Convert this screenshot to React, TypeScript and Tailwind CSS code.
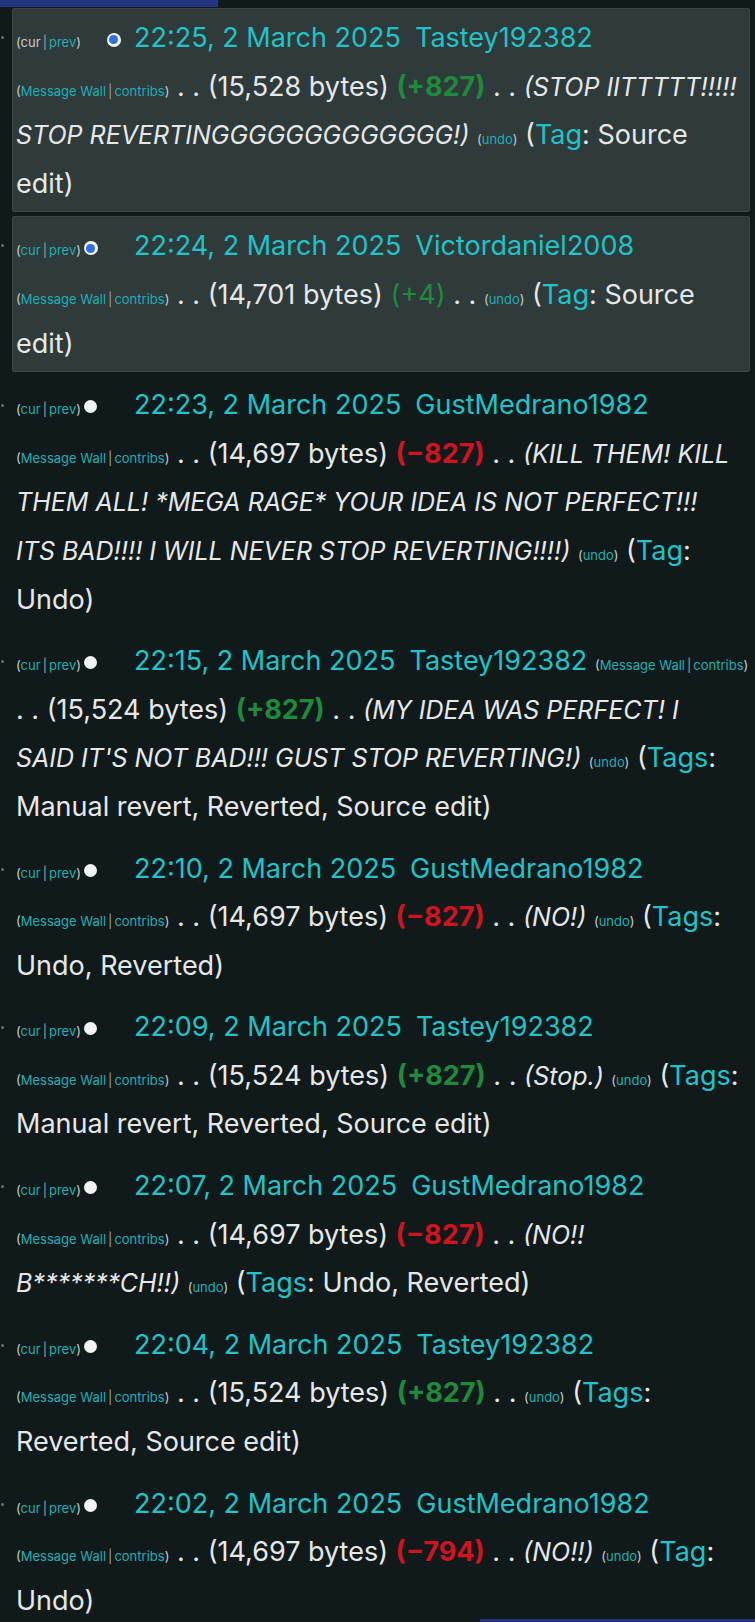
import React from 'react';

type Entry = {
  panel?: boolean;
  curLink?: boolean;
  farRadio?: boolean;
  radio: 'blue' | 'white';
  lines: React.ReactNode[];
};

const Small = ({ a, b, aLink = true }: { a: string; b: string; aLink?: boolean }) => (
  <span className="text-[13px] leading-none text-[#c9cdcd]">
    (<span className={aLink ? 'text-[#22aeb3]' : ''}>{a}</span>
    <span className="mx-[2px] text-[#9aa2a2]">|</span>
    <span className="text-[#22aeb3]">{b}</span>)
  </span>
);

const Undo = () => (
  <span className="text-[13px] leading-none text-[#c9cdcd]">
    (<span className="text-[#22aeb3]">undo</span>)
  </span>
);

const Dots = () => <span>. .</span>;
const Plus = ({ n, bold = true }: { n: string; bold?: boolean }) => (
  <span className={bold ? 'font-bold text-[#1f8a3b]' : 'text-[#1f8a3b]'}>({n})</span>
);
const Minus = ({ n }: { n: string }) => (
  <span className="font-bold text-[#d3121f]">(−{n})</span>
);
const Tag = ({ s = '' }: { s?: string }) => (
  <span>
    (<span className="text-[#1fc3c8]">Tag{s}</span>:
  </span>
);
const Cm = ({ children }: { children: React.ReactNode }) => (
  <i className="text-[25px]">{children}</i>
);

function Head({ time, user, after }: { time: string; user: string; after?: React.ReactNode }) {
  return (
    <>
      <span className="text-[#1fc3c8]">{time}, 2 March 2025</span>
      <span className="ml-[14px] text-[#1fc3c8]">{user}</span>
      {after}
    </>
  );
}

const entries: Entry[] = [
  {
    panel: true,
    curLink: false,
    farRadio: true,
    radio: 'blue',
    lines: [
      <Head time="22:25" user="Tastey192382" />,
      <>
        <Small a="Message Wall" b="contribs" /> <Dots /> (15,528 bytes) <Plus n="+827" /> <Dots />{' '}
        <Cm>(STOP IITTTTT!!!!!</Cm>
      </>,
      <>
        <Cm>STOP REVERTINGGGGGGGGGGGGG!)</Cm> <Undo /> <Tag /> Source
      </>,
      <>edit)</>,
    ],
  },
  {
    panel: true,
    radio: 'blue',
    lines: [
      <Head time="22:24" user="Victordaniel2008" />,
      <>
        <Small a="Message Wall" b="contribs" /> <Dots /> (14,701 bytes) <Plus n="+4" bold={false} /> <Dots />{' '}
        <Undo /> <Tag /> Source
      </>,
      <>edit)</>,
    ],
  },
  {
    radio: 'white',
    lines: [
      <Head time="22:23" user="GustMedrano1982" />,
      <>
        <Small a="Message Wall" b="contribs" /> <Dots /> (14,697 bytes) <Minus n="827" /> <Dots />{' '}
        <Cm>(KILL THEM! KILL</Cm>
      </>,
      <>
        <Cm>THEM ALL! *MEGA RAGE* YOUR IDEA IS NOT PERFECT!!!</Cm>
      </>,
      <>
        <Cm>ITS BAD!!!! I WILL NEVER STOP REVERTING!!!!)</Cm> <Undo /> <Tag />
      </>,
      <>Undo)</>,
    ],
  },
  {
    radio: 'white',
    lines: [
      <Head time="22:15" user="Tastey192382" after={<> <Small a="Message Wall" b="contribs" /></>} />,
      <>
        <Dots /> (15,524 bytes) <Plus n="+827" /> <Dots /> <Cm>(MY IDEA WAS PERFECT! I</Cm>
      </>,
      <>
        <Cm>SAID IT'S NOT BAD!!! GUST STOP REVERTING!)</Cm> <Undo /> <Tag s="s" />
      </>,
      <>Manual revert, Reverted, Source edit)</>,
    ],
  },
  {
    radio: 'white',
    lines: [
      <Head time="22:10" user="GustMedrano1982" />,
      <>
        <Small a="Message Wall" b="contribs" /> <Dots /> (14,697 bytes) <Minus n="827" /> <Dots />{' '}
        <Cm>(NO!)</Cm> <Undo /> <Tag s="s" />
      </>,
      <>Undo, Reverted)</>,
    ],
  },
  {
    radio: 'white',
    lines: [
      <Head time="22:09" user="Tastey192382" />,
      <>
        <Small a="Message Wall" b="contribs" /> <Dots /> (15,524 bytes) <Plus n="+827" /> <Dots />{' '}
        <Cm>(Stop.)</Cm> <Undo /> <Tag s="s" />
      </>,
      <>Manual revert, Reverted, Source edit)</>,
    ],
  },
  {
    radio: 'white',
    lines: [
      <Head time="22:07" user="GustMedrano1982" />,
      <>
        <Small a="Message Wall" b="contribs" /> <Dots /> (14,697 bytes) <Minus n="827" /> <Dots />{' '}
        <Cm>(NO!!</Cm>
      </>,
      <>
        <Cm>B*******CH!!)</Cm> <Undo /> <Tag s="s" /> Undo, Reverted)
      </>,
    ],
  },
  {
    radio: 'white',
    lines: [
      <Head time="22:04" user="Tastey192382" />,
      <>
        <Small a="Message Wall" b="contribs" /> <Dots /> (15,524 bytes) <Plus n="+827" /> <Dots />{' '}
        <Undo /> <Tag s="s" />
      </>,
      <>Reverted, Source edit)</>,
    ],
  },
  {
    radio: 'white',
    lines: [
      <Head time="22:02" user="GustMedrano1982" />,
      <>
        <Small a="Message Wall" b="contribs" /> <Dots /> (14,697 bytes) <Minus n="794" /> <Dots />{' '}
        <Cm>(NO!!)</Cm> <Undo /> <Tag />
      </>,
      <>Undo)</>,
    ],
  },
];

function Row({ e }: { e: Entry }) {
  return (
    <li className="flex mt-[4px] first:mt-0">
      {/* list marker */}
      <div className="w-[12px] shrink-0 pt-[28px] pl-[1px]">
        <div className="w-[3px] h-[3px] rounded-full bg-[#6a7373]" />
      </div>
      <div
        className={
          e.panel
            ? 'flex-1 pl-[3px] pt-[5px] pb-[3px] bg-[#2f3a3b] border border-[#3b4647] rounded-[2px]'
            : 'flex-1 pl-[4px] pt-[5px] pb-[4px]'
        }
      >
        {e.lines.map((ln, i) => (
          <div key={i} className="h-[48.6px] leading-[48.6px] whitespace-nowrap">
            {i === 0 && (
              <span className="inline-block w-[118px]">
                <Small a="cur" b="prev" aLink={e.curLink !== false} />
                {e.radio === 'blue' ? (
                  <span
                    className={`inline-block align-middle w-[14px] h-[14px] rounded-full bg-[#f4f6f6] p-[2.5px] ${
                      e.farRadio ? 'ml-[26px]' : 'ml-[3px]'
                    }`}
                  >
                    <span className="block w-full h-full rounded-full bg-[#2f6fe6]" />
                  </span>
                ) : (
                  <span className="inline-block align-middle ml-[3px] w-[13px] h-[13px] rounded-full bg-[#f2f4f4]" />
                )}
              </span>
            )}
            {ln}
          </div>
        ))}
      </div>
    </li>
  );
}

export default function App() {
  return (
    <div
      className="w-[755px] h-[1622px] flex flex-col overflow-hidden bg-[#101a1b] text-[#e6e8e8] text-[27px]"
      style={{ fontFamily: 'Inter, "Noto Sans", sans-serif' }}
    >
      {/* top bar */}
      <div className="h-[8px] shrink-0 flex">
        <div className="w-[218px] h-[7px] bg-[#22357e]" />
      </div>
      <ul className="flex-1 overflow-hidden pr-[5px]">
        {entries.map((e, i) => (
          <Row key={i} e={e} />
        ))}
      </ul>
      {/* bottom bar */}
      <div className="h-[3px] shrink-0 ml-[480px] bg-[#22357e]" />
    </div>
  );
}
